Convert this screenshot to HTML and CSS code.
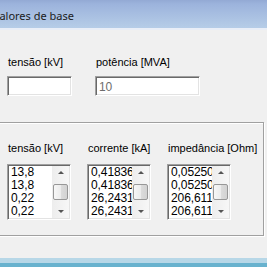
FILE: index.html
```html
<!DOCTYPE html>
<html lang="pt">
<head>
  <meta charset="UTF-8">
  <title>Valores de base</title>
  <link rel="stylesheet" href="styles.css">
</head>
<body>
  <div class="window">
    <div class="titlebar"><span class="title">Valores de base</span></div>

    <div class="client">
      <div class="fields">
        <div class="field field-short">
          <label for="tensao">tensão [kV]</label>
          <input id="tensao" class="edit" type="text">
        </div>
        <div class="field field-wide">
          <label for="potencia">potência [MVA]</label>
          <input id="potencia" class="edit" type="text" value="10" disabled>
        </div>
      </div>

      <div class="group">
        <div class="lists">
          <div class="field">
            <label>tensão [kV]</label>
            <div class="listbox">
              <div class="items">
                <div class="item">13,8</div>
                <div class="item">13,8</div>
                <div class="item">0,22</div>
                <div class="item">0,22</div>
              </div>
              <div class="scroll">
                <div class="btn btn-up"><span class="arrow-up"></span></div>
                <div class="thumb"></div>
                <div class="track"></div>
                <div class="btn btn-down"><span class="arrow-down"></span></div>
              </div>
            </div>
          </div>

          <div class="field">
            <label>corrente [kA]</label>
            <div class="listbox">
              <div class="items">
                <div class="item">0,4183697</div>
                <div class="item">0,4183697</div>
                <div class="item">26,243194</div>
                <div class="item">26,243194</div>
              </div>
              <div class="scroll">
                <div class="btn btn-up"><span class="arrow-up"></span></div>
                <div class="thumb"></div>
                <div class="track"></div>
                <div class="btn btn-down"><span class="arrow-down"></span></div>
              </div>
            </div>
          </div>

          <div class="field">
            <label>impedância [Ohm]</label>
            <div class="listbox">
              <div class="items">
                <div class="item">0,0525099</div>
                <div class="item">0,0525099</div>
                <div class="item">206,61157</div>
                <div class="item">206,61157</div>
              </div>
              <div class="scroll">
                <div class="btn btn-up"><span class="arrow-up"></span></div>
                <div class="thumb"></div>
                <div class="track"></div>
                <div class="btn btn-down"><span class="arrow-down"></span></div>
              </div>
            </div>
          </div>
        </div>
      </div>
    </div>

    <div class="taskbar"></div>
  </div>
</body>
</html>
```

FILE: styles.css
```css
body {
  margin: 0;
  width: 267px;
  height: 267px;
  overflow: hidden;
  background: #f0f0f0;
  font-family: "Liberation Sans", Arial, sans-serif;
  font-size: 11px;
  color: #000;
}

.window {
  height: 267px;
  display: flex;
  flex-direction: column;
}

/* title bar (window is cut off on the left) */
.titlebar {
  height: 25px;
  padding-top: 3px;
  display: flex;
  align-items: center;
  background: linear-gradient(#93a9d4 0, #9cb3dc 4px, #b5cce7 27px);
  border-bottom: 2px solid #e9eef7;
  font-family: "Noto Sans", "Liberation Sans", sans-serif;
  font-size: 11px;
  color: #1b1b1b;
  white-space: nowrap;
}

.title {
  margin-left: -7px;
}

.client {
  flex: 1;
}

.fields {
  display: flex;
  gap: 23px;
  padding: 26px 0 0 7px;
}

.field {
  display: flex;
  flex-direction: column;
}

.field label {
  display: block;
  line-height: 13px;
  padding-left: 1px;
  font-weight: normal;
  white-space: nowrap;
}

.field-short { width: 65px; }
.field-wide { width: 105px; }

/* sunken 3D edit box */
.edit {
  box-sizing: border-box;
  width: 100%;
  height: 20px;
  margin: 7px 0 0;
  padding: 1px 3px 0;
  border: 1px solid;
  border-color: #a0a0a0 #fff #fff #a0a0a0;
  box-shadow: inset 1px 1px #696969, inset -1px -1px #e3e3e3;
  background: #fff;
  font-family: "Liberation Sans", Arial, sans-serif;
  font-size: 12px;
  letter-spacing: -0.2px;
  color: #000;
  outline: none;
}

.edit:disabled {
  color: #6d6d6d;
  background: #fff;
}

/* etched group box, left side runs off the window */
.group {
  box-sizing: border-box;
  width: 274px;
  height: 114px;
  margin: 26px 0 0 -10px;
  padding: 19px 0 0 16px;
  border: 1px solid #a0a0a0;
  box-shadow: inset 1px 1px #fff, 1px 1px #fff;
}

.lists {
  display: flex;
  gap: 16px;
}

.lists .field {
  width: 64px;
}

.listbox {
  box-sizing: border-box;
  height: 56px;
  margin-top: 9px;
  padding: 1px;
  display: flex;
  border: 1px solid;
  border-color: #a0a0a0 #fff #fff #a0a0a0;
  box-shadow: inset 1px 1px #696969, inset -1px -1px #e3e3e3;
  background: #fff;
}

.items {
  flex: 1;
  overflow: hidden;
  padding-left: 2px;
  font-size: 12px;
  letter-spacing: -0.1px;
}

.item {
  height: 13px;
  line-height: 13px;
  white-space: nowrap;
}

.scroll {
  width: 17px;
  display: flex;
  flex-direction: column;
  background: linear-gradient(to right, #ededed, #f7f7f7);
}

.btn {
  display: flex;
  justify-content: center;
}

.btn-up { padding-top: 5px; height: 12px; }
.btn-down { padding-top: 9px; height: 8px; }

.arrow-up,
.arrow-down {
  width: 0;
  height: 0;
  border-left: 3px solid transparent;
  border-right: 3px solid transparent;
}

.arrow-up { border-bottom: 3px solid #555; }
.arrow-down { border-top: 3px solid #555; }

.thumb {
  box-sizing: border-box;
  height: 16px;
  margin: 1px 1px 0;
  border: 1px solid #979797;
  border-radius: 2px;
  background: linear-gradient(to right, #f7f7f7, #ececec 50%, #dcdcdc 51%, #d2d2d2);
}

.track {
  flex: 1;
}

.taskbar {
  height: 4px;
  border-top: 5px solid #b7d7e7;
  background: #68b2ce;
}
```
